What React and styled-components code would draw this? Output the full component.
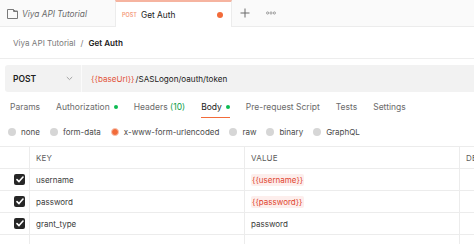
import React from 'react';
import styled, { createGlobalStyle } from 'styled-components';

const Global = createGlobalStyle`
  html, body {
    margin: 0;
    padding: 0;
    background: #ffffff;
    overflow: hidden;
  }
  body {
    font-family: Inter, "Open Sans", sans-serif;
    color: #212121;
  }
`;

const Page = styled.div`
  width: 474px;
  height: 244px;
  overflow: hidden;
  background: #ffffff;
`;

const TabBar = styled.div`
  display: flex;
  align-items: stretch;
  height: 27px;
  border-bottom: 1px solid #ececec;
  box-sizing: border-box;
  background: #fafafa;
`;

const Tab = styled.div`
  display: flex;
  align-items: center;
  gap: 4px;
  width: ${p => p.$width}px;
  box-sizing: border-box;
  padding: 0 8px 0 6px;
  font-size: 8.3px;
  background: ${p => (p.$active ? '#ffffff' : 'transparent')};
  border-top: 2px solid ${p => (p.$active ? '#f6b4a0' : 'transparent')};
  border-left: 1px solid ${p => (p.$active ? '#ececec' : 'transparent')};
  border-right: 1px solid ${p => (p.$active ? '#ececec' : 'transparent')};
  margin-bottom: ${p => (p.$active ? '-1px' : '0')};
  color: ${p => (p.$active ? '#212121' : '#6b6b6b')};
  font-style: ${p => (p.$italic ? 'italic' : 'normal')};
`;

const Method = styled.span`
  color: #f49b7c;
  font-size: 5.5px;
  font-weight: 600;
`;

const Spacer = styled.span`
  flex: 1;
`;

const Dot = styled.span`
  width: ${p => p.$size || 5}px;
  height: ${p => p.$size || 5}px;
  border-radius: 50%;
  background: ${p => p.$color};
  display: inline-block;
`;

const IconButton = styled.div`
  display: flex;
  align-items: center;
  justify-content: center;
  width: ${p => p.$width}px;
  color: #6b6b6b;
`;

const Breadcrumb = styled.div`
  display: flex;
  align-items: center;
  gap: 5px;
  height: 32px;
  padding-left: 13px;
  font-size: 8.1px;
  border-bottom: 1px solid #ededed;
  box-sizing: border-box;
`;

const Crumb = styled.span`
  color: ${p => (p.$current ? '#212121' : '#7a7a7a')};
  font-weight: ${p => (p.$current ? 600 : 400)};
`;

const UrlBar = styled.div`
  display: flex;
  height: 27px;
  margin: 6px 0 0 5px;
  background: #f2f2f2;
  border-radius: 3px 0 0 3px;
`;

const MethodBox = styled.div`
  display: flex;
  align-items: center;
  justify-content: space-between;
  width: 77px;
  box-sizing: border-box;
  padding: 0 8px 0 8px;
  border-right: 1px solid #fbfbfb;
  font-size: 8.5px;
  font-weight: 600;
  color: #212121;
`;

const UrlText = styled.div`
  display: flex;
  align-items: center;
  gap: 1px;
  padding-left: 9px;
  font-size: 8.1px;
  color: #212121;
`;

const Variable = styled.span`
  color: ${p => p.$color || '#e2523a'};
`;

const RequestTabs = styled.div`
  display: flex;
  align-items: center;
  gap: 16px;
  height: 30px;
  padding-left: 10px;
  font-size: 8.5px;
`;

const RequestTab = styled.div`
  position: relative;
  display: flex;
  align-items: center;
  gap: 4px;
  color: ${p => (p.$active ? '#212121' : '#6b6b6b')};
  height: 100%;

  &::after {
    content: '';
    display: ${p => (p.$active ? 'block' : 'none')};
    position: absolute;
    left: 0;
    right: 0;
    bottom: 4px;
    height: 1.5px;
    background: #f26b3a;
  }
`;

const Count = styled.span`
  color: #0b9e47;
`;

const RadioRow = styled.div`
  display: flex;
  align-items: center;
  gap: 10px;
  height: 20px;
  padding: 0 0 0 8px;
  margin-bottom: 4px;
  font-size: 8px;
  color: #4a4a4a;
`;

const RadioOption = styled.label`
  display: flex;
  align-items: center;
  gap: 5px;
`;

const Radio = styled.span`
  width: 8px;
  height: 8px;
  border-radius: 50%;
  box-sizing: border-box;
  background: ${p => (p.$checked ? '#f26b3a' : '#d6d6d6')};
  border: ${p => (p.$checked ? '1.5px solid #f8c4b2' : 'none')};
`;

const Table = styled.div`
  display: grid;
  grid-template-columns: 30px 215px 215px 1fr;
  border-top: 1px solid #ececec;
`;

const Cell = styled.div`
  height: 22px;
  box-sizing: border-box;
  display: flex;
  align-items: center;
  justify-content: ${p => (p.$center ? 'flex-end' : 'flex-start')};
  padding: ${p => (p.$center ? '0 4px 0 0' : '0 6px')};
  border-bottom: 1px solid #ececec;
  border-right: ${p => (p.$last ? 'none' : '1px solid #ececec')};
  font-size: 8px;
  color: ${p => (p.$head ? '#5c5c5c' : '#3a3a3a')};
  letter-spacing: ${p => (p.$head ? '0.2px' : '0')};
  white-space: nowrap;
  overflow: hidden;
`;

const VarChip = styled.span`
  color: #e0452f;
  background: #fdeeec;
  padding: 1px 1px;
  border-radius: 2px;
`;

const Checkbox = styled.span`
  width: 11px;
  height: 11px;
  border-radius: 2px;
  background: #262626;
  display: flex;
  align-items: center;
  justify-content: center;
`;

const CollectionIcon = () => (
  <svg width="11" height="10" viewBox="0 0 11 10" fill="none" stroke="#7a7a7a" strokeWidth="1">
    <path d="M0.5 0.5h6l1.5 1.5h2.5v7.5h-10z" />
    <path d="M6.5 0.5v2h4" />
  </svg>
);

const Chevron = () => (
  <svg width="7" height="5" viewBox="0 0 7 5" fill="none" stroke="#9a9a9a" strokeWidth="0.9">
    <path d="M0.8 1l2.7 2.6 2.7-2.6" />
  </svg>
);

const Check = () => (
  <svg width="8" height="7" viewBox="0 0 8 7" fill="none" stroke="#ffffff" strokeWidth="1.6" strokeLinecap="round" strokeLinejoin="round">
    <path d="M1 3.6l2 2 4-4.6" />
  </svg>
);

const Plus = () => (
  <svg width="10" height="10" viewBox="0 0 10 10" stroke="#6b6b6b" strokeWidth="1">
    <path d="M5 0.5v9M0.5 5h9" />
  </svg>
);

const Ellipsis = () => (
  <svg width="10" height="4" viewBox="0 0 10 4" fill="none" stroke="#8a8a8a" strokeWidth="0.8">
    <circle cx="1.6" cy="2" r="1.1" />
    <circle cx="5" cy="2" r="1.1" />
    <circle cx="8.4" cy="2" r="1.1" />
  </svg>
);

const rows = [
  { key: 'username', value: '{{username}}', variable: true },
  { key: 'password', value: '{{password}}', variable: true },
  { key: 'grant_type', value: 'password', variable: false },
];

const bodyTypes = ['none', 'form-data', 'x-www-form-urlencoded', 'raw', 'binary', 'GraphQL'];

const App = () => {
  return (
    <Page>
      <Global />
      <TabBar>
        <Tab $width={115} $italic>
          <CollectionIcon />
          <span>Viya API Tutorial</span>
        </Tab>
        <Tab $width={117} $active>
          <Method>POST</Method>
          <span>Get Auth</span>
          <Spacer />
          <Dot $color="#f26b3a" $size={6} />
        </Tab>
        <IconButton $width={26}>
          <Plus />
        </IconButton>
        <IconButton $width={26}>
          <Ellipsis />
        </IconButton>
      </TabBar>

      <Breadcrumb>
        <Crumb>Viya API Tutorial</Crumb>
        <Crumb>/</Crumb>
        <Crumb $current>Get Auth</Crumb>
      </Breadcrumb>

      <UrlBar>
        <MethodBox>
          <span>POST</span>
          <Chevron />
        </MethodBox>
        <UrlText>
          <Variable>{'{{baseUrl}}'}</Variable>
          <span>/SASLogon/oauth/token</span>
        </UrlText>
      </UrlBar>

      <RequestTabs>
        <RequestTab>Params</RequestTab>
        <RequestTab>
          Authorization <Dot $color="#0cbb52" $size={4} />
        </RequestTab>
        <RequestTab>
          <span>
            Headers <Count>(10)</Count>
          </span>
        </RequestTab>
        <RequestTab $active>
          Body <Dot $color="#0cbb52" $size={4} />
        </RequestTab>
        <RequestTab>Pre-request Script</RequestTab>
        <RequestTab>Tests</RequestTab>
        <RequestTab>Settings</RequestTab>
      </RequestTabs>

      <RadioRow>
        {bodyTypes.map(type => (
          <RadioOption key={type}>
            <Radio $checked={type === 'x-www-form-urlencoded'} />
            {type}
          </RadioOption>
        ))}
      </RadioRow>

      <Table>
        <Cell />
        <Cell $head>KEY</Cell>
        <Cell $head>VALUE</Cell>
        <Cell $head $last>DESCRIPTION</Cell>
        {rows.map(row => (
          <React.Fragment key={row.key}>
            <Cell $center>
              <Checkbox>
                <Check />
              </Checkbox>
            </Cell>
            <Cell>{row.key}</Cell>
            <Cell>{row.variable ? <VarChip>{row.value}</VarChip> : row.value}</Cell>
            <Cell $last />
          </React.Fragment>
        ))}
        <Cell />
        <Cell />
        <Cell />
        <Cell $last />
      </Table>
    </Page>
  );
};

export default App;
